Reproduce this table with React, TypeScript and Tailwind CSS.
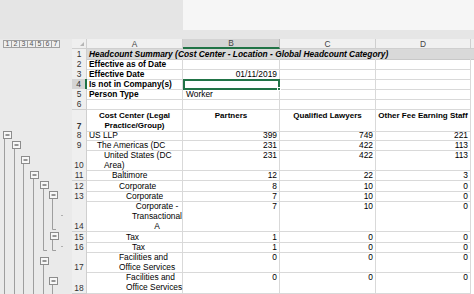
import React from 'react'

type Row = {
  n: number
  h: string
  a?: string[]
  aCls?: string
  b?: string
  c?: string
  d?: string
  lvl?: number
}

const INDENT = ['pl-[2px]', 'pl-[10px]', 'pl-[17px]', 'pl-[25px]', 'pl-[32px]', 'pl-[39px]', 'pl-[45px]']

const DATA: Row[] = [
  { n: 8, h: 'h-[10px]', a: ['US LLP'], b: '399', c: '749', d: '221', lvl: 0 },
  { n: 9, h: 'h-[10px]', a: ['The Americas (DC'], b: '231', c: '422', d: '113', lvl: 1 },
  { n: 10, h: 'h-[20px]', a: ['United States (DC', 'Area)'], b: '231', c: '422', d: '113', lvl: 2 },
  { n: 11, h: 'h-[11px]', a: ['Baltimore'], b: '12', c: '22', d: '3', lvl: 3 },
  { n: 12, h: 'h-[10px]', a: ['Corporate'], b: '8', c: '10', d: '0', lvl: 4 },
  { n: 13, h: 'h-[10px]', a: ['Corporate'], b: '7', c: '10', d: '0', lvl: 5 },
  { n: 14, h: 'h-[31px]', a: ['Corporate -', 'Transactional', 'A'], aCls: 'text-center', b: '7', c: '10', d: '0', lvl: 6 },
  { n: 15, h: 'h-[10px]', a: ['Tax'], b: '1', c: '0', d: '0', lvl: 5 },
  { n: 16, h: 'h-[10px]', a: ['Tax'], b: '1', c: '0', d: '0', lvl: 6 },
  { n: 17, h: 'h-[20px]', a: ['Facilities and', 'Office Services'], b: '0', c: '0', d: '0', lvl: 4 },
  { n: 18, h: 'h-[22px]', a: ['Facilities and', 'Office Services'], b: '0', c: '0', d: '0', lvl: 5 },
]

const GRID = 'grid grid-cols-[15px_96px_97px_96px_95px_1fr]'
const CELL = 'border-r border-b border-[#d9d9d9] whitespace-nowrap leading-[10px]'
const RN = 'flex items-end justify-center bg-[#efefef] border-r border-b border-[#cfcfcf] text-[#333] leading-[10px]'

function Minus({ x, y }: { x: number; y: number }) {
  return (
    <g>
      <rect x={x + 0.5} y={y + 0.5} width={8} height={7} fill="#f7f7f7" stroke="#8c8c8c" />
      <line x1={x + 2.5} y1={y + 4} x2={x + 6.5} y2={y + 4} stroke="#333" strokeWidth={1} />
    </g>
  )
}

function Gutter() {
  const c = '#9e9e9e'
  return (
    <svg width={72} height={245} className="block">
      <line x1={4.5} y1={90} x2={4.5} y2={245} stroke={c} />
      <line x1={14.5} y1={100} x2={14.5} y2={245} stroke={c} />
      <line x1={23.5} y1={115} x2={23.5} y2={245} stroke={c} />
      <line x1={33.5} y1={130} x2={33.5} y2={245} stroke={c} />
      <polyline points="43.5,140 43.5,201.5 47,201.5" fill="none" stroke={c} />
      <polyline points="52.5,150 52.5,180.5 56,180.5" fill="none" stroke={c} />
      <polyline points="52.5,191 52.5,201.5 56,201.5" fill="none" stroke={c} />
      <line x1={43.5} y1={216} x2={43.5} y2={245} stroke={c} />
      <line x1={52.5} y1={236} x2={52.5} y2={245} stroke={c} />
      <rect x={61.5} y={166} width={1} height={1} fill="#777" />
      <rect x={61.5} y={197} width={1} height={1} fill="#777" />
      <Minus x={3} y={82} />
      <Minus x={12} y={92} />
      <Minus x={21} y={107} />
      <Minus x={30} y={122} />
      <Minus x={40} y={132} />
      <Minus x={49} y={142} />
      <Minus x={50} y={183} />
      <Minus x={40} y={208} />
      <Minus x={49} y={228} />
    </svg>
  )
}

export default function App() {
  return (
    <div className="w-[474px] h-[294px] overflow-hidden bg-[#e6e6e6] text-[8.4px] text-black" style={{ fontFamily: '"Liberation Sans", Arial, sans-serif' }}>
      <div className="flex h-[30px]">
        <div className="w-[183px] bg-[#e5e5e5]" />
        <div className="flex-1 bg-[#f6f6f6]" />
      </div>
      <div className="h-[9px] bg-[#e6e6e6]" />
      <div className="flex">
        <div className="w-[72px] shrink-0 bg-[#eaeaea]">
          <div className="h-[10px] flex items-center pl-[3px]">
            {[1, 2, 3, 4, 5, 6, 7].map(i => (
              <div key={i} className="w-[9px] h-[8px] border border-[#a0a0a0] -ml-px first:ml-0 bg-[#efefef] text-[7px] leading-[6px] text-[#555] flex items-center justify-center">{i}</div>
            ))}
          </div>
          <Gutter />
        </div>
        <div className="flex-1 bg-white">
          <div className={`${GRID} h-[10px] text-[#444]`}>
            <div className="bg-[#efefef] border-r border-b border-[#cfcfcf] flex items-end justify-end pr-[2px] pb-[2px]">
              <svg width={4} height={4}><polygon points="4,0 4,4 0,4" fill="#b5b5b5" /></svg>
            </div>
            <div className="bg-[#f0f0f0] border-r border-b border-[#cfcfcf] flex items-center justify-center leading-none">A</div>
            <div className="bg-[#d4d4d4] border-r border-[#b8b8b8] border-b-2 border-b-[#217346] flex items-center justify-center leading-none">B</div>
            <div className="bg-[#f0f0f0] border-r border-b border-[#cfcfcf] flex items-center justify-center leading-none">C</div>
            <div className="bg-[#f0f0f0] border-r border-b border-[#cfcfcf] flex items-center justify-center leading-none">D</div>
            <div className="bg-[#f0f0f0] border-b border-[#cfcfcf]" />
          </div>

          <div className={`${GRID} h-[10px]`}>
            <div className={RN}>1</div>
            <div className="col-span-5 bg-[#d9d9d9] border-b border-[#c8c8c8] pl-[2px] font-bold italic whitespace-nowrap leading-[10px]">Headcount Summary (Cost Center - Location - Global Headcount Category)</div>
          </div>
          <div className={`${GRID} h-[10px]`}>
            <div className={RN}>2</div>
            <div className={`${CELL} pl-[2px] font-bold`}>Effective as of Date</div>
            <div className={CELL} /><div className={CELL} /><div className={CELL} /><div />
          </div>
          <div className={`${GRID} h-[10px]`}>
            <div className={RN}>3</div>
            <div className={`${CELL} pl-[2px] font-bold`}>Effective Date</div>
            <div className={`${CELL} text-right pr-[2px]`}>01/11/2019</div>
            <div className={CELL} /><div className={CELL} /><div />
          </div>
          <div className={`${GRID} h-[10px]`}>
            <div className="flex items-end justify-center bg-[#d4d4d4] border-r-2 border-r-[#217346] border-b border-[#b8b8b8] text-[#333] leading-[10px]">4</div>
            <div className={`${CELL} pl-[2px] font-bold`}>Is not in Company(s)</div>
            <div className="relative border-2 border-[#217346]">
              <div className="absolute -right-[3px] -bottom-[3px] w-[4px] h-[4px] bg-[#217346] border border-white" />
            </div>
            <div className={CELL} /><div className={CELL} /><div />
          </div>
          <div className={`${GRID} h-[10px]`}>
            <div className={RN}>5</div>
            <div className={`${CELL} pl-[2px] font-bold`}>Person Type</div>
            <div className={`${CELL} pl-[3px]`}>Worker</div>
            <div className={CELL} /><div className={CELL} /><div />
          </div>
          <div className={`${GRID} h-[11px]`}>
            <div className={RN}>6</div>
            <div className={CELL} /><div className={CELL} /><div className={CELL} /><div className={CELL} /><div />
          </div>
          <div className={`${GRID} h-[20px] font-bold text-[8px]`}>
            <div className={`${RN} text-[8.4px]`}>7</div>
            <div className={`${CELL} text-center pt-px`}>Cost Center (Legal<br />Practice/Group)</div>
            <div className={`${CELL} text-center pt-px`}>Partners</div>
            <div className={`${CELL} text-center pt-px`}>Qualified Lawyers</div>
            <div className={`${CELL} text-center pt-px`}>Other Fee Earning Staff</div>
            <div />
          </div>

          {DATA.map(r => (
            <div key={r.n} className={`${GRID} ${r.h}`}>
              <div className={RN}>{r.n}</div>
              <div className={`${CELL} ${INDENT[r.lvl ?? 0]} ${r.aCls ?? ''}`}>
                {r.a?.map((t, i) => <div key={i}>{t}</div>)}
              </div>
              <div className={`${CELL} text-right pr-[2px]`}>{r.b}</div>
              <div className={`${CELL} text-right pr-[2px]`}>{r.c}</div>
              <div className={`${CELL} text-right pr-[2px]`}>{r.d}</div>
              <div />
            </div>
          ))}
        </div>
      </div>
    </div>
  )
}
